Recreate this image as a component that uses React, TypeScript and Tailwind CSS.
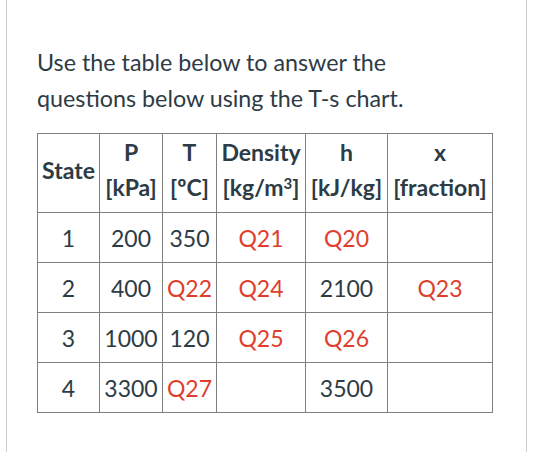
export default function App() {
  const red = 'text-[#e03e2d]'
  const rows = [
    { s: '1', p: '200', t: '350', d: 'Q21', h: 'Q20', x: '' },
    { s: '2', p: '400', t: 'Q22', d: 'Q24', h: '2100', x: 'Q23' },
    { s: '3', p: '1000', t: '120', d: 'Q25', h: 'Q26', x: '' },
    { s: '4', p: '3300', t: 'Q27', d: '', h: '3500', x: '' },
  ]
  const cell = (v: string) => (
    <span className={v.startsWith('Q') ? red : ''}>{v}</span>
  )

  return (
    <div className="min-h-screen bg-white font-['Lato',sans-serif] text-[#2d3b45]">
      <div className="ml-[6px] w-[521px] min-h-[452px] border-x border-[#c7cdd1] pl-[30px] pt-[44px]">
        {/* intro text */}
        <p className="text-[23.3px] leading-[36px] w-[420px]">
          Use the table below to answer the questions below using the T-s chart.
        </p>

        {/* state table */}
        <table className="mt-[17px] table-fixed border-collapse text-[23px] leading-[34px]">
          <colgroup>
            <col className="w-[62px]" />
            <col className="w-[63px]" />
            <col className="w-[54px]" />
            <col className="w-[89px]" />
            <col className="w-[82px]" />
            <col className="w-[105px]" />
          </colgroup>
          <thead>
            <tr className="h-[79px] font-bold leading-[35px]">
              <th className="border border-[#808080] px-0 pb-[6px] text-center">State</th>
              <th className="border border-[#808080] px-0 pb-[6px] text-center">P<br />[kPa]</th>
              <th className="border border-[#808080] px-0 pb-[6px] text-center">T<br />[ºC]</th>
              <th className="border border-[#808080] px-0 pb-[6px] text-center">
                Density<br />[kg/m<sup className="text-[15px]">3</sup>]
              </th>
              <th className="border border-[#808080] px-0 pb-[6px] text-center">h<br />[kJ/kg]</th>
              <th className="border border-[#808080] px-0 pb-[6px] text-center">x<br />[fraction]</th>
            </tr>
          </thead>
          <tbody>
            {rows.map((r) => (
              <tr key={r.s} className="h-[50px]">
                <td className="border border-[#808080] text-center">{r.s}</td>
                <td className="border border-[#808080] text-center">{cell(r.p)}</td>
                <td className="border border-[#808080] text-center">{cell(r.t)}</td>
                <td className="border border-[#808080] text-center">{cell(r.d)}</td>
                <td className="border border-[#808080] text-center">{cell(r.h)}</td>
                <td className="border border-[#808080] text-center">{cell(r.x)}</td>
              </tr>
            ))}
          </tbody>
        </table>
      </div>
    </div>
  )
}
